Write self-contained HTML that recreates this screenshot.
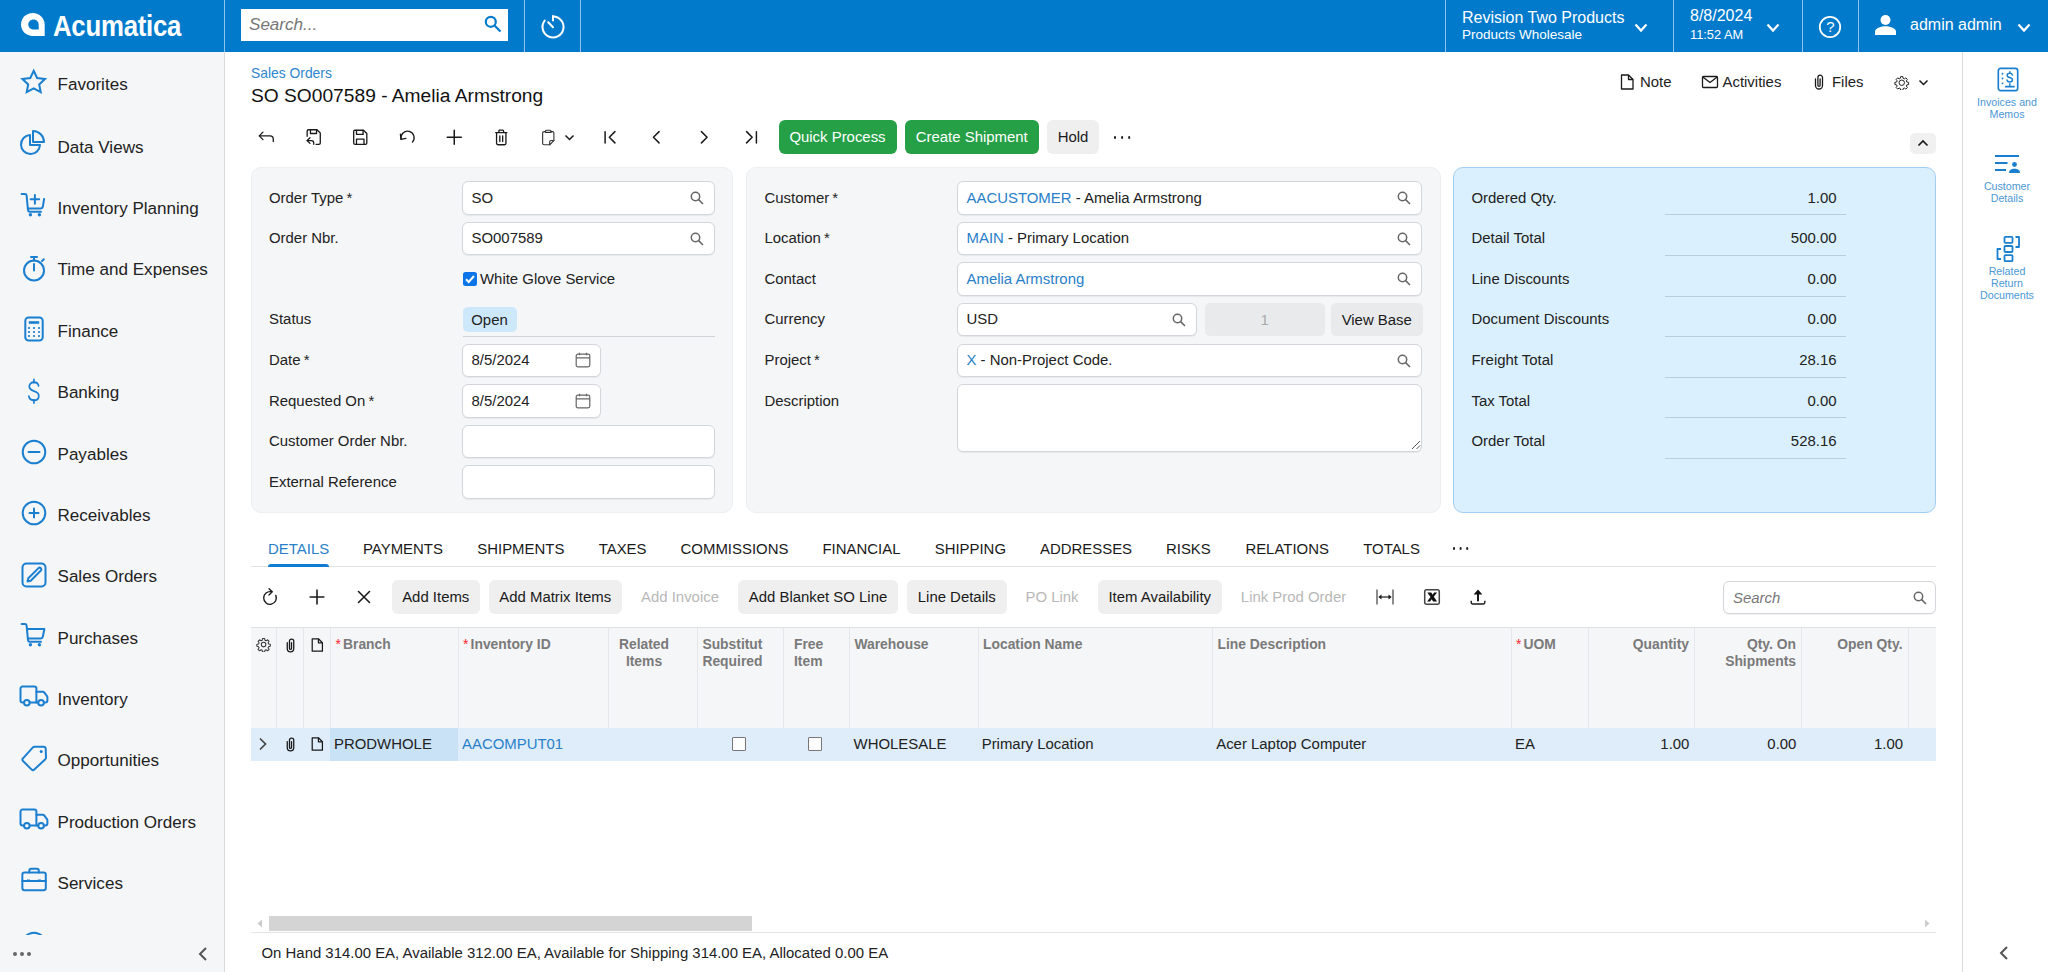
<!DOCTYPE html>
<html><head><meta charset="utf-8"><title>Sales Orders</title>
<style>
*{box-sizing:border-box;margin:0;padding:0}
html,body{width:2048px;height:972px;overflow:hidden;background:#fff;font-family:"Liberation Sans",sans-serif;color:#222}
.abs{position:absolute}
#top{position:absolute;left:0;top:0;width:2048px;height:52px;background:#027acc}
#top .div{position:absolute;top:0;width:1px;height:52px;background:#8cc3ec}
#side{position:absolute;left:0;top:52px;width:225px;height:920px;background:#f5f6f8;border-right:1px solid #dadbdd;overflow:hidden}
.nav{position:absolute;left:57.500px;font-size:17.070px;line-height:20px;color:#222;white-space:nowrap}
.nico{position:absolute;left:18.500px;width:30px;height:30px}
.nico svg{width:30px;height:30px;fill:none;stroke:#1b7fd0;stroke-width:2;stroke-linecap:round;stroke-linejoin:round}
#rail{position:absolute;left:1962px;top:52px;width:86px;height:920px;overflow:visible;background:#fff;border-left:1px solid #dadbdd}
.t{position:absolute;white-space:nowrap}
.lbl{position:absolute;font-size:14.930px;line-height:18px;white-space:nowrap;color:#222}
.inp{position:absolute;background:#fff;border:1px solid #d3d6da;border-radius:6px;box-shadow:0 1px 1px rgba(0,0,0,.06)}
.inp span{position:absolute;left:8.500px;top:6.500px;font-size:14.930px;line-height:18px;white-space:nowrap}
.lnk{color:#2a7fc9}
.panel{position:absolute;background:#f5f6f8;border-radius:10px;border:1px solid #eceef0}
.btn{position:absolute;height:34px;border-radius:6px;font-size:14.930px;line-height:34px;text-align:center;white-space:nowrap}
.ico{position:absolute}
.ico svg{display:block;fill:none;stroke:#1a1a1a;stroke-width:1.4;stroke-linecap:round;stroke-linejoin:round}
.rt{position:absolute;left:0;width:88px;text-align:center;font-size:10.670px;line-height:12.250px;color:#4b98d6}
.tb{position:absolute;top:126px;width:22.500px;height:22.500px}
.tb svg{width:22.500px;height:22.500px;fill:none;stroke:#1a1a1a;stroke-width:1.400;stroke-linecap:round;stroke-linejoin:round}
.gh{position:absolute;font-size:13.870px;line-height:16.500px;font-weight:bold;color:#7a7a7a;white-space:nowrap}
.gc{font-size:14.930px;line-height:18px}
</style></head><body>



<!-- TOP BAR -->
<div id="top">
  <div class="div" style="left:224px"></div>
  <div class="div" style="left:524px"></div>
  <div class="div" style="left:580px"></div>
  <div class="div" style="left:1445px"></div>
  <div class="div" style="left:1673px"></div>
  <div class="div" style="left:1802px"></div>
  <div class="div" style="left:1858px"></div>
  <!-- logo -->
  <svg class="abs" style="left:21px;top:13px" width="24" height="23" viewBox="0 0 24 23"><path d="M11.8 0C18.4 0 23.7 5.2 23.7 11.7V23H11.8C5.2 23 0 17.9 0 11.5S5.2 0 11.8 0z" fill="#fff"/><path d="M12.5 6.400c2.900 0 5.200 2.200 5.200 5v5h-5.200c-2.900 0-5.200-2.200-5.200-5s2.300-5 5.200-5z" fill="#027acc"/></svg>
  <div class="t" id="logo" style="left:53px;top:8px;font-size:30px;line-height:36px;font-weight:bold;color:#fff;transform:scaleX(.86);transform-origin:0 0;letter-spacing:-.3px">Acumatica</div>
  <!-- search -->
  <div class="abs" style="left:241px;top:9px;width:267px;height:32px;background:#fff"></div>
  <div class="t" style="left:249px;top:15px;font-size:17.070px;line-height:20px;font-style:italic;color:#777">Search...</div>
  <svg class="abs" style="left:484px;top:15px" width="18" height="18" viewBox="0 0 18 18" fill="none" stroke="#027acc" stroke-width="2.2"><circle cx="6.800" cy="6.800" r="5"/><path d="M10.500 10.500L16.500 16.500" stroke-linecap="butt"/></svg>
  <!-- clock -->
  <svg class="abs" style="left:540px;top:14px" width="26" height="26" viewBox="0 0 26 26" fill="none" stroke="#fff" stroke-width="2" stroke-linecap="round"><path d="M13 2.500a10.500 10.500 0 1 1-8.300 4.100"/><path d="M13 2v4.500"/><path d="M13 13.200L8.200 8.200"/></svg>
  <!-- company -->
  <div class="t" style="left:1462px;top:8px;font-size:16px;line-height:19px;color:#fff">Revision Two Products</div>
  <div class="t" style="left:1462px;top:27px;font-size:13.5px;line-height:15px;color:#fff">Products Wholesale</div>
  <svg class="abs chev" style="left:1634px;top:23px" width="14" height="10" viewBox="0 0 14 10" fill="none" stroke="#fff" stroke-width="2.200"><path d="M1.500 1.500L7 7.500L12.500 1.500"/></svg>
  <div class="t" style="left:1690px;top:6px;font-size:16px;line-height:19px;color:#fff">8/8/2024</div>
  <div class="t" style="left:1690px;top:27px;font-size:12.800px;line-height:15px;color:#fff">11:52 AM</div>
  <svg class="abs chev" style="left:1766px;top:23px" width="14" height="10" viewBox="0 0 14 10" fill="none" stroke="#fff" stroke-width="2.200"><path d="M1.500 1.500L7 7.500L12.500 1.500"/></svg>
  <!-- help -->
  <svg class="abs" style="left:1818px;top:15px" width="24" height="24" viewBox="0 0 24 24" fill="none" stroke="#fff" stroke-width="1.800"><circle cx="12" cy="12" r="10.200"/></svg>
  <div class="t" style="left:1825px;top:17px;font-size:14.930px;line-height:20px;color:#fff;width:11px;text-align:center">?</div>
  <!-- user -->
  <svg class="abs" style="left:1875px;top:15px" width="21" height="20" viewBox="0 0 21 20" fill="#fff"><circle cx="10.500" cy="5" r="5"/><path d="M0 20v-3.500c0-3.500 7-5.200 10.500-5.200s10.500 1.700 10.500 5.200V20z"/></svg>
  <div class="t" style="left:1910px;top:15px;font-size:16px;line-height:20px;color:#fff">admin admin</div>
  <svg class="abs chev" style="left:2017px;top:23px" width="14" height="10" viewBox="0 0 14 10" fill="none" stroke="#fff" stroke-width="2.200"><path d="M1.500 1.500L7 7.500L12.500 1.500"/></svg>
</div>


<!-- SIDEBAR -->
<div id="side">
  <div class="nico" style="top:15.2px;margin-left:0px"><svg viewBox="0 0 30 30"><path stroke-linejoin="miter" d="M14.700 3.800l3.400 7.200 7.900 1-5.800 5.400 1.500 7.800-7-3.900-7 3.900 1.500-7.800L3.400 12l7.900-1z"/></svg></div><div class="nav" style="top:22.9px">Favorites</div>
  <div class="nico" style="top:75.2px;margin-left:-1.3px"><svg viewBox="0 0 30 30"><path d="M13 8a9.500 9.500 0 1 0 10 10H13z"/><path d="M16 4v11h11A11 11 0 0 0 16 4z"/></svg></div><div class="nav" style="top:85.7px">Data Views</div>
  <div class="nico" style="top:139.4px;margin-left:0px"><svg viewBox="0 0 30 30"><path d="M2.600 2.900H5.800a1.800 1.800 0 0 1 1.800 1.600L9 19.200a1.800 1.800 0 0 0 1.800 1.600H22"/><circle cx="11.400" cy="23.700" r="1.700" fill="#1b7fd0" stroke="none"/><circle cx="20.400" cy="23.700" r="1.700" fill="#1b7fd0" stroke="none"/><path d="M25.100 8L23.800 15.800a2 2 0 0 1-2 1.600H9.200"/><path d="M15.900 4v8.700M11.600 8.350h8.600"/></svg></div><div class="nav" style="top:147.1px">Inventory Planning</div>
  <div class="nico" style="top:200.7px;margin-left:0px"><svg viewBox="0 0 30 30"><circle cx="15" cy="17.500" r="10"/><path d="M15 11v6.500M12 4h6M15 4v3.500M23 8l1.800-1.800"/></svg></div><div class="nav" style="top:208.4px">Time and Expenses</div>
  <div class="nico" style="top:262.1px;margin-left:0px"><svg viewBox="0 0 30 30"><rect x="6.300" y="3.500" width="17.400" height="23" rx="3.300"/><path d="M9.800 8.500h10.400" stroke-width="2.600" stroke-linecap="butt"/><g stroke-width="2.200"><path d="M10 14h.01M15 14h.01M20 14h.01M10 18h.01M15 18h.01M20 18h.01M10 22h.01M15 22h.01M20 22h.01"/></g></svg></div><div class="nav" style="top:269.8px">Finance</div>
  <div class="nico" style="top:323.5px;margin-left:0px"><svg viewBox="0 0 30 30"><g transform="translate(2.2 0) scale(.85 1)"><path d="M20.500 9.800c-.6-2.300-2.700-3.500-5.500-3.500-3.200 0-5.500 1.700-5.500 4.300 0 2.700 2.300 3.700 5.500 4.500 3.400.8 5.700 1.900 5.700 4.800 0 2.700-2.400 4.400-5.700 4.400-3.200 0-5.400-1.400-6-4"/><path d="M15 3.500v3M15 24v3"/></g></svg></div><div class="nav" style="top:331.2px">Banking</div>
  <div class="nico" style="top:384.8px;margin-left:0px"><svg viewBox="0 0 30 30"><circle cx="15" cy="15" r="11.300"/><path d="M9.500 15h11"/></svg></div><div class="nav" style="top:392.5px">Payables</div>
  <div class="nico" style="top:446.2px;margin-left:0px"><svg viewBox="0 0 30 30"><circle cx="15" cy="15" r="11.300"/><path d="M10.500 15h9M15 10.500v9"/></svg></div><div class="nav" style="top:453.9px">Receivables</div>
  <div class="nico" style="top:507.6px;margin-left:0px"><svg viewBox="0 0 30 30"><rect x="3.500" y="3.500" width="23" height="23" rx="4"/><path d="M8.500 21.500l.8-3.200L19.500 8.100a1.700 1.700 0 0 1 2.400 2.400L11.700 20.700z"/></svg></div><div class="nav" style="top:515.3px">Sales Orders</div>
  <div class="nico" style="top:569.0px;margin-left:0px"><svg viewBox="0 0 30 30"><path d="M2.600 2.900H5.800a1.800 1.800 0 0 1 1.800 1.600L9 19.200a1.800 1.800 0 0 0 1.800 1.600H22"/><circle cx="11.400" cy="23.700" r="1.700" fill="#1b7fd0" stroke="none"/><circle cx="20.400" cy="23.700" r="1.700" fill="#1b7fd0" stroke="none"/><path d="M8.500 8H25.400L23.800 15.800a2 2 0 0 1-2 1.600H9.200"/></svg></div><div class="nav" style="top:576.7px">Purchases</div>
  <div class="nico" style="top:630.3px;margin-left:0px"><svg viewBox="0 0 30 30"><path d="M5 20.600H3.500a2 2 0 0 1-2-2V6.600a2 2 0 0 1 2-2H15.400a2 2 0 0 1 2 2V20.600"/><path d="M10.700 20.600H19.200"/><path d="M17.400 9.800H23.800a2 2 0 0 1 1.600.8L28 14.200a2 2 0 0 1 .4 1.200V18.600a2 2 0 0 1-2 2H24.900"/><circle cx="7.860" cy="20.800" r="2.800"/><circle cx="22.060" cy="20.800" r="2.800"/></svg></div><div class="nav" style="top:638.0px">Inventory</div>
  <div class="nico" style="top:691.7px;margin-left:0px"><svg viewBox="0 0 30 30"><path d="M15.300 2.700H24.600Q26.600 2.700 26.700 4.700L27 13.600Q27 14.600 26.300 15.300L15.300 25.600Q14 26.800 12.700 25.600L4 17Q2.700 15.600 4 14.300L13.900 3.400Q14.500 2.700 15.300 2.700Z"/><circle cx="22.200" cy="7.400" r="1.500" fill="#1b7fd0" stroke="none"/></svg></div><div class="nav" style="top:699.4px">Opportunities</div>
  <div class="nico" style="top:753.1px;margin-left:0px"><svg viewBox="0 0 30 30"><path d="M5 20.600H3.500a2 2 0 0 1-2-2V6.600a2 2 0 0 1 2-2H15.400a2 2 0 0 1 2 2V20.600"/><path d="M10.700 20.600H19.200"/><path d="M17.400 9.800H23.800a2 2 0 0 1 1.600.8L28 14.200a2 2 0 0 1 .4 1.200V18.600a2 2 0 0 1-2 2H24.900"/><circle cx="7.860" cy="20.800" r="2.800"/><circle cx="22.060" cy="20.800" r="2.800"/></svg></div><div class="nav" style="top:760.8px">Production Orders</div>
  <div class="nico" style="top:814.4px;margin-left:0px"><svg viewBox="0 0 30 30"><rect x="3.350" y="6.400" width="23.450" height="17.900" rx="2.200"/><path d="M10.300 6.400V4.700a2 2 0 0 1 2-2h5.500a2 2 0 0 1 2 2V6.400"/><path d="M3.350 15.050H26.800"/><path d="M9.500 14.500v-1M20.400 14.500v-1" stroke-width="3" stroke-linecap="butt"/></svg></div><div class="nav" style="top:822.1px">Services</div>
  <div class="nico" style="top:877px"><svg viewBox="0 0 30 30"><circle cx="15" cy="15" r="11.300"/></svg></div>
  <div class="abs" style="left:0;top:883px;width:224px;height:37px;background:#f5f6f8"></div>
  <div class="abs" style="left:12.500px;top:899.500px;width:4px;height:4px;border-radius:2px;background:#666;box-shadow:7px 0 0 #666,14px 0 0 #666"></div>
  <svg class="abs" style="left:197px;top:893.500px" width="12" height="16" viewBox="0 0 12 16" fill="none" stroke="#555" stroke-width="2"><path d="M9 2L3 8l6 6"/></svg>
</div>

<!-- RIGHT RAIL -->
<div id="rail">
  <svg class="abs" style="left:33px;top:15px" width="24" height="26" viewBox="0 0 26 27" preserveAspectRatio="none" fill="none" stroke="#1b7fd0" stroke-width="1.800" stroke-linecap="round" stroke-linejoin="round"><rect x="2.500" y="1.500" width="21" height="23" rx="2.500"/><path d="M7 7h.01M7 12h.01M7 17h.01" stroke-width="2"/><path d="M10.500 20.500h9"/><path d="M17.800 8.300c-.4-1.200-1.500-1.800-2.900-1.800-1.600 0-2.800.8-2.800 2.200 0 1.300 1.100 1.800 2.800 2.200 1.700.4 2.900 1 2.900 2.400 0 1.400-1.300 2.200-2.900 2.200-1.600 0-2.700-.7-3-2M15 5v1.500M15 17.500V19" stroke-width="1.600"/></svg>
  <div class="rt" style="top:44px">Invoices and<br>Memos</div>
  <svg class="abs" style="left:31px;top:101px" width="28" height="22" viewBox="0 0 28 22" fill="none" stroke="#1b7fd0" stroke-width="1.800" stroke-linecap="butt"><path d="M1 3h24M1 10h12.500M1 17h11"/><circle cx="20.500" cy="11.500" r="2.400" fill="#1b7fd0" stroke="none"/><path d="M15 20c0-3 2.500-4.200 5.500-4.200s5.500 1.200 5.500 4.200z" fill="#1b7fd0" stroke="none"/></svg>
  <div class="rt" style="top:128px">Customer<br>Details</div>
  <svg class="abs" style="left:32px;top:183px" width="26" height="28" viewBox="0 0 26 28" fill="none" stroke="#1b7fd0" stroke-width="1.800" stroke-linecap="butt" stroke-linejoin="round"><rect x="9.500" y="1.800" width="8" height="6" rx="1"/><rect x="9.500" y="11" width="8" height="6" rx="1"/><rect x="9.500" y="20.200" width="8" height="6" rx="1"/><path d="M20.500 2h3.500v10h-3.500M6 14H2.500v10H6"/></svg>
  <div class="rt" style="top:212.500px">Related<br>Return<br>Documents</div>
  <svg class="abs" style="left:35px;top:893px" width="12" height="16" viewBox="0 0 12 16" fill="none" stroke="#555" stroke-width="2"><path d="M9 2L3 8l6 6"/></svg>
</div>

<!-- MAIN 1: title + toolbar -->
<div class="t" id="bc" style="left:251px;top:65px;font-size:13.870px;line-height:16px;color:#2e86cc">Sales Orders</div>
<div class="t" id="ttl" style="left:251px;top:85px;font-size:19.200px;line-height:22px;color:#111">SO SO007589 - Amelia Armstrong</div>

<!-- toolbar icons (centers at y=137.3) -->
<div class="tb" style="left:255.2px"><svg viewBox="0 0 24 24"><path d="M5 10.500h11a3.500 3.500 0 0 1 3.500 3.500v2.500"/><path d="M8.500 6.500L4.500 10.500l4 4"/></svg></div>
<div class="tb" style="left:302.100px"><svg viewBox="0 0 24 24"><path d="M5.500 11V5.500a1.500 1.500 0 0 1 1.500-1.500h9l3.500 3.500V18a1.500 1.500 0 0 1-1.500 1.500h-3"/><path d="M9 4.200V8h6.500V4.200"/><path d="M8.500 12.500l-3 3 3 3"/><path d="M5.500 15.500h4.500a2.500 2.500 0 0 1 2.500 2.500v1.500"/></svg></div>
<div class="tb" style="left:349.2px"><svg viewBox="0 0 24 24"><path d="M6 4.500h9.500l3.500 3.500v10a1.500 1.500 0 0 1-1.500 1.500h-11A1.500 1.500 0 0 1 5 18V6a1.500 1.500 0 0 1 1-1.500z"/><path d="M8 4.700V9h7V4.700"/><path d="M8 19.300V14h8v5.300"/></svg></div>
<div class="tb" style="left:396.1px"><svg viewBox="0 0 24 24"><path d="M5.500 14A7 7 0 1 1 17.500 17.200"/><path d="M4.700 8.800l.6 5.400 5.300-.9"/></svg></div>
<div class="tb" style="left:442.9px"><svg viewBox="0 0 24 24" style="stroke-width:1.600"><path d="M12 4.500v15M4.500 12h15"/></svg></div>
<div class="tb" style="left:490.1px"><svg viewBox="0 0 24 24"><path d="M6 7h12M9.500 7V5.300a1 1 0 0 1 1-1h3a1 1 0 0 1 1 1V7"/><path d="M7 7v11.500a1.500 1.500 0 0 0 1.500 1.500h7a1.500 1.500 0 0 0 1.500-1.500V7"/><path d="M10.500 10.500v6M13.500 10.500v6"/></svg></div>
<div class="tb" style="left:537.2px"><svg viewBox="0 0 24 24" style="stroke-width:1.200;stroke:#333"><path d="M9 6H7.500A1.500 1.500 0 0 0 6 7.500v11A1.500 1.500 0 0 0 7.500 20h6l4.500-4.500v-8A1.500 1.500 0 0 0 16.500 6H15"/><path d="M9 6.800V5.500a1 1 0 0 1 1-1h4a1 1 0 0 1 1 1v1.300z"/><path d="M13.500 20v-3a1.500 1.500 0 0 1 1.500-1.500h3"/></svg></div>
<svg class="abs" style="left:564px;top:134px" width="11" height="8" viewBox="0 0 11 8" fill="none" stroke="#1a1a1a" stroke-width="1.500"><path d="M1.500 1.500l4 4 4-4"/></svg>
<div class="tb" style="left:599.0px"><svg viewBox="0 0 24 24" style="stroke-width:1.600"><path d="M6.500 6v12M17 6l-6 6 6 6"/></svg></div>
<div class="tb" style="left:645.4px"><svg viewBox="0 0 24 24" style="stroke-width:1.600"><path d="M15 6l-6 6 6 6"/></svg></div>
<div class="tb" style="left:692.8px"><svg viewBox="0 0 24 24" style="stroke-width:1.600"><path d="M9 6l6 6-6 6"/></svg></div>
<div class="tb" style="left:739.8px"><svg viewBox="0 0 24 24" style="stroke-width:1.600"><path d="M17.500 6v12M7 6l6 6-6 6"/></svg></div>

<div class="btn" style="left:778.500px;top:120px;width:118px;background:#25a046;color:#fff">Quick Process</div>
<div class="btn" style="left:905px;top:120px;width:133.500px;background:#25a046;color:#fff">Create Shipment</div>
<div class="btn" style="left:1047px;top:120px;width:52px;background:#efefef;color:#1a1a1a">Hold</div>
<div class="abs" style="left:1113.500px;top:136.200px;width:2.400px;height:2.400px;border-radius:2px;background:#222;box-shadow:7.100px 0 0 #222,14.200px 0 0 #222"></div>

<!-- top-right actions -->
<svg class="abs" style="left:1619px;top:73px" width="16" height="18" viewBox="0 0 16 18" fill="none" stroke="#1a1a1a" stroke-width="1.300" stroke-linejoin="round"><path d="M2.500 2h7l4.500 4.500v9.500h-11.500z"/><path d="M9.500 2v4.500h4.500"/></svg>
<div class="t" style="left:1640px;top:73px;font-size:14.930px;line-height:18px">Note</div>
<svg class="abs" style="left:1701px;top:75px" width="18" height="14" viewBox="0 0 18 14" fill="none" stroke="#1a1a1a" stroke-width="1.300" stroke-linejoin="round"><rect x="1.500" y="1.500" width="15" height="11" rx="1"/><path d="M1.800 2l7.200 5.500 7.200-5.500"/></svg>
<div class="t" style="left:1722.500px;top:73px;font-size:14.930px;line-height:18px">Activities</div>
<svg class="abs" style="left:1812px;top:73px" width="14" height="18" viewBox="0 0 14 18" fill="none" stroke="#1a1a1a" stroke-width="1.300" stroke-linecap="round"><path d="M3.500 6v6.500a3.500 3.500 0 0 0 7 0V4.500a2.300 2.300 0 0 0-4.600 0v7.800a1.100 1.100 0 0 0 2.200 0V6"/></svg>
<div class="t" style="left:1832px;top:73px;font-size:14.930px;line-height:18px">Files</div>
<svg class="abs" style="left:1894px;top:74.500px" width="15.500" height="15.500" viewBox="0 0 24 24" fill="none" stroke="#1a1a1a" stroke-width="1.500" stroke-linejoin="round"><circle cx="12" cy="12" r="4.200"/><path d="M10.300 2.500h3.400l.5 2.700 1.800.8 2.300-1.600 2.400 2.400-1.600 2.300.8 1.800 2.700.5v3.400l-2.700.5-.8 1.800 1.600 2.300-2.400 2.400-2.300-1.600-1.800.8-.5 2.700h-3.400l-.5-2.700-1.800-.8-2.300 1.600-2.400-2.400 1.600-2.300-.8-1.800-2.700-.5v-3.400l2.700-.5.8-1.800-1.600-2.300 2.400-2.400 2.300 1.600 1.800-.8z"/></svg>
<svg class="abs" style="left:1918px;top:79px" width="11" height="8" viewBox="0 0 11 8" fill="none" stroke="#1a1a1a" stroke-width="1.500"><path d="M1.500 1.500l4 4 4-4"/></svg>
<div class="abs" style="left:1910.300px;top:133.200px;width:25.500px;height:20.500px;border-radius:5px;background:#f0f0f0"></div>
<svg class="abs" style="left:1917px;top:139.200px" width="12" height="8" viewBox="0 0 12 8" fill="none" stroke="#1a1a1a" stroke-width="1.700"><path d="M1.500 6.500l4.500-4.500 4.500 4.500"/></svg>

<!-- MAIN 2: form panels -->
<div class="panel" style="left:251px;top:167px;width:482px;height:345.500px"></div>
<div class="panel" style="left:746px;top:167px;width:694.500px;height:345.500px"></div>
<div class="panel" style="left:1453px;top:167px;width:483px;height:345.500px;background:#dbf0fe;border:1px solid #a3cdf0"></div>
<div class="lbl" style="left:269px;top:188.6px">Order Type <span style="margin-left:-1px">*</span></div>
<div class="inp" style="left:462px;top:181.1px;width:253px;height:33.5px"><span>SO</span></div>
<svg class="abs" style="left:690px;top:191.1px" width="14" height="14" viewBox="0 0 14 14" fill="none" stroke="#666" stroke-width="1.500"><circle cx="5.500" cy="5.500" r="4.200"/><path d="M8.600 8.600l4.400 4.400"/></svg>
<div class="lbl" style="left:269px;top:229.2px">Order Nbr.</div>
<div class="inp" style="left:462px;top:221.7px;width:253px;height:33.5px"><span>SO007589</span></div>
<svg class="abs" style="left:690px;top:231.7px" width="14" height="14" viewBox="0 0 14 14" fill="none" stroke="#666" stroke-width="1.500"><circle cx="5.500" cy="5.500" r="4.200"/><path d="M8.600 8.600l4.400 4.400"/></svg>
<div class="abs" style="left:462.500px;top:271.8px;width:14px;height:14px;border-radius:2.500px;background:#0b74e8"></div><svg class="abs" style="left:462.500px;top:271.8px" width="14" height="14" viewBox="0 0 14 14" fill="none" stroke="#fff" stroke-width="2"><path d="M3 7.300l2.700 2.700 5.300-6"/></svg>
<div class="lbl" style="left:480px;top:269.8px">White Glove Service</div>
<div class="lbl" style="left:269px;top:310.4px">Status</div>
<div class="abs" style="left:462.500px;top:306.9px;width:54px;height:25px;border-radius:5px;background:#cde7fb;font-size:14.930px;line-height:25px;text-align:center">Open</div>
<div class="abs" style="left:462.500px;top:335.9px;width:252.500px;height:1px;background:#d0d2d5"></div>
<div class="lbl" style="left:269px;top:351.0px">Date <span style="margin-left:-1px">*</span></div>
<div class="inp" style="left:462px;top:343.5px;width:138.5px;height:33.5px"><span>8/5/2024</span></div>
<svg class="abs" style="left:575.0px;top:352.0px" width="16" height="16" viewBox="0 0 16 16" fill="none" stroke="#666" stroke-width="1.200"><rect x="1.200" y="2.200" width="13.600" height="12.600" rx="1.800"/><path d="M1.200 5.800h13.600M4.500 .8v2.400M11.500 .8v2.400"/></svg>
<div class="lbl" style="left:269px;top:391.6px">Requested On <span style="margin-left:-1px">*</span></div>
<div class="inp" style="left:462px;top:384.1px;width:138.5px;height:33.5px"><span>8/5/2024</span></div>
<svg class="abs" style="left:575.0px;top:392.6px" width="16" height="16" viewBox="0 0 16 16" fill="none" stroke="#666" stroke-width="1.200"><rect x="1.200" y="2.200" width="13.600" height="12.600" rx="1.800"/><path d="M1.200 5.800h13.600M4.500 .8v2.400M11.500 .8v2.400"/></svg>
<div class="lbl" style="left:269px;top:432.2px">Customer Order Nbr.</div>
<div class="inp" style="left:462px;top:424.7px;width:253px;height:33.5px"><span></span></div>
<div class="lbl" style="left:269px;top:472.8px">External Reference</div>
<div class="inp" style="left:462px;top:465.3px;width:253px;height:33.5px"><span></span></div>
<div class="lbl" style="left:764.5px;top:188.6px">Customer <span style="margin-left:-1px">*</span></div>
<div class="inp" style="left:957px;top:181.1px;width:465px;height:33.5px"><span><span class="lnk" style="position:static">AACUSTOMER</span> - Amelia Armstrong</span></div>
<svg class="abs" style="left:1397px;top:191.1px" width="14" height="14" viewBox="0 0 14 14" fill="none" stroke="#666" stroke-width="1.500"><circle cx="5.500" cy="5.500" r="4.200"/><path d="M8.600 8.600l4.400 4.400"/></svg>
<div class="lbl" style="left:764.5px;top:229.2px">Location <span style="margin-left:-1px">*</span></div>
<div class="inp" style="left:957px;top:221.7px;width:465px;height:33.5px"><span><span class="lnk" style="position:static">MAIN</span> - Primary Location</span></div>
<svg class="abs" style="left:1397px;top:231.7px" width="14" height="14" viewBox="0 0 14 14" fill="none" stroke="#666" stroke-width="1.500"><circle cx="5.500" cy="5.500" r="4.200"/><path d="M8.600 8.600l4.400 4.400"/></svg>
<div class="lbl" style="left:764.5px;top:269.8px">Contact</div>
<div class="inp" style="left:957px;top:262.3px;width:465px;height:33.5px"><span><span class="lnk" style="position:static">Amelia Armstrong</span></span></div>
<svg class="abs" style="left:1397px;top:272.3px" width="14" height="14" viewBox="0 0 14 14" fill="none" stroke="#666" stroke-width="1.500"><circle cx="5.500" cy="5.500" r="4.200"/><path d="M8.600 8.600l4.400 4.400"/></svg>
<div class="lbl" style="left:764.5px;top:310.4px">Currency</div>
<div class="inp" style="left:957px;top:302.9px;width:240px;height:33.5px"><span>USD</span></div>
<svg class="abs" style="left:1172px;top:312.9px" width="14" height="14" viewBox="0 0 14 14" fill="none" stroke="#666" stroke-width="1.500"><circle cx="5.500" cy="5.500" r="4.200"/><path d="M8.600 8.600l4.400 4.400"/></svg>
<div class="abs" style="left:1204.500px;top:302.9px;width:120.500px;height:33.500px;border-radius:5px;background:#e9eaec;font-size:14.930px;line-height:33.500px;text-align:center;color:#aaa">1</div>
<div class="abs" style="left:1331px;top:302.9px;width:91.500px;height:33.500px;border-radius:5px;background:#e9eaec;font-size:14.930px;line-height:33.500px;text-align:center;color:#1a1a1a">View Base</div>
<div class="lbl" style="left:764.5px;top:351.0px">Project <span style="margin-left:-1px">*</span></div>
<div class="inp" style="left:957px;top:343.5px;width:465px;height:33.5px"><span><span class="lnk" style="position:static">X</span> - Non-Project Code.</span></div>
<svg class="abs" style="left:1397px;top:353.5px" width="14" height="14" viewBox="0 0 14 14" fill="none" stroke="#666" stroke-width="1.500"><circle cx="5.500" cy="5.500" r="4.200"/><path d="M8.600 8.600l4.400 4.400"/></svg>
<div class="lbl" style="left:764.5px;top:391.6px">Description</div>
<div class="inp" style="left:957px;top:384.1px;width:465px;height:68px"><span></span></div>
<svg class="abs" style="left:1411px;top:440px" width="10" height="10" viewBox="0 0 10 10" stroke="#555" stroke-width="1" fill="none"><path d="M9 1L1 9M9 5.500L5.500 9"/></svg>
<div class="lbl" style="left:1471.500px;top:188.6px">Ordered Qty.</div><div class="lbl" style="left:1665px;width:171.500px;text-align:right;top:188.6px">1.00</div><div class="abs" style="left:1665px;top:214.3px;width:180.500px;height:1px;background:#b9cfe0"></div>
<div class="lbl" style="left:1471.500px;top:229.2px">Detail Total</div><div class="lbl" style="left:1665px;width:171.500px;text-align:right;top:229.2px">500.00</div><div class="abs" style="left:1665px;top:254.9px;width:180.500px;height:1px;background:#b9cfe0"></div>
<div class="lbl" style="left:1471.500px;top:269.8px">Line Discounts</div><div class="lbl" style="left:1665px;width:171.500px;text-align:right;top:269.8px">0.00</div><div class="abs" style="left:1665px;top:295.5px;width:180.500px;height:1px;background:#b9cfe0"></div>
<div class="lbl" style="left:1471.500px;top:310.4px">Document Discounts</div><div class="lbl" style="left:1665px;width:171.500px;text-align:right;top:310.4px">0.00</div><div class="abs" style="left:1665px;top:336.1px;width:180.500px;height:1px;background:#b9cfe0"></div>
<div class="lbl" style="left:1471.500px;top:351.0px">Freight Total</div><div class="lbl" style="left:1665px;width:171.500px;text-align:right;top:351.0px">28.16</div><div class="abs" style="left:1665px;top:376.7px;width:180.500px;height:1px;background:#b9cfe0"></div>
<div class="lbl" style="left:1471.500px;top:391.6px">Tax Total</div><div class="lbl" style="left:1665px;width:171.500px;text-align:right;top:391.6px">0.00</div><div class="abs" style="left:1665px;top:417.3px;width:180.500px;height:1px;background:#b9cfe0"></div>
<div class="lbl" style="left:1471.500px;top:432.2px">Order Total</div><div class="lbl" style="left:1665px;width:171.500px;text-align:right;top:432.2px">528.16</div><div class="abs" style="left:1665px;top:457.9px;width:180.500px;height:1px;background:#b9cfe0"></div>

<!-- MAIN 3: tabs + grid -->
<div class="t tab" style="left:268.1px;top:539.500px;font-size:14.930px;line-height:18px;color:#2a7fc9">DETAILS</div>
<div class="t tab" style="left:363px;top:539.500px;font-size:14.930px;line-height:18px;color:#1a1a1a">PAYMENTS</div>
<div class="t tab" style="left:477.3px;top:539.500px;font-size:14.930px;line-height:18px;color:#1a1a1a">SHIPMENTS</div>
<div class="t tab" style="left:598.7px;top:539.500px;font-size:14.930px;line-height:18px;color:#1a1a1a">TAXES</div>
<div class="t tab" style="left:680.6px;top:539.500px;font-size:14.930px;line-height:18px;color:#1a1a1a">COMMISSIONS</div>
<div class="t tab" style="left:822.5px;top:539.500px;font-size:14.930px;line-height:18px;color:#1a1a1a">FINANCIAL</div>
<div class="t tab" style="left:934.7px;top:539.500px;font-size:14.930px;line-height:18px;color:#1a1a1a">SHIPPING</div>
<div class="t tab" style="left:1040px;top:539.500px;font-size:14.930px;line-height:18px;color:#1a1a1a">ADDRESSES</div>
<div class="t tab" style="left:1166px;top:539.500px;font-size:14.930px;line-height:18px;color:#1a1a1a">RISKS</div>
<div class="t tab" style="left:1245.4px;top:539.500px;font-size:14.930px;line-height:18px;color:#1a1a1a">RELATIONS</div>
<div class="t tab" style="left:1363.2px;top:539.500px;font-size:14.930px;line-height:18px;color:#1a1a1a">TOTALS</div>
<div class="abs" style="left:1452.500px;top:547.200px;width:2.400px;height:2.400px;border-radius:2px;background:#222;box-shadow:6.600px 0 0 #222,13.200px 0 0 #222"></div>
<div class="abs" style="left:251px;top:566px;width:1685px;height:1px;background:#e1e2e5"></div>
<div class="abs" style="left:268px;top:563.500px;width:60.500px;height:3px;border-radius:3px 3px 0 0;background:#0f7bd3"></div>
<svg class="abs" style="left:259px;top:586px" width="22" height="22" viewBox="0 0 24 24" fill="none" stroke="#1a1a1a" stroke-width="1.500" stroke-linecap="round" stroke-linejoin="round"><path d="M18.300 10.200A6.900 6.900 0 1 1 13.400 6.300"/><path d="M11 3l3.500 3.400-3.600 3.400"/></svg>
<svg class="abs" style="left:306px;top:586px" width="22" height="22" viewBox="0 0 24 24" fill="none" stroke="#1a1a1a" stroke-width="1.700" stroke-linecap="round"><path d="M12 4.500v15M4.500 12h15"/></svg>
<svg class="abs" style="left:352.500px;top:586px" width="22" height="22" viewBox="0 0 24 24" fill="none" stroke="#1a1a1a" stroke-width="1.700" stroke-linecap="round"><path d="M6 6l12 12M18 6L6 18"/></svg>
<div class="btn" style="left:391.5px;top:580px;width:88.5px;height:33.500px;line-height:33.500px;background:#efefef;color:#1a1a1a">Add Items</div>
<div class="btn" style="left:488.5px;top:580px;width:133.5px;height:33.500px;line-height:33.500px;background:#efefef;color:#1a1a1a">Add Matrix Items</div>
<div class="btn" style="left:630px;top:580px;width:100px;height:33.500px;line-height:33.500px;color:#b8b8b8">Add Invoice</div>
<div class="btn" style="left:738px;top:580px;width:160px;height:33.500px;line-height:33.500px;background:#efefef;color:#1a1a1a">Add Blanket SO Line</div>
<div class="btn" style="left:907px;top:580px;width:99.5px;height:33.500px;line-height:33.500px;background:#efefef;color:#1a1a1a">Line Details</div>
<div class="btn" style="left:1015px;top:580px;width:74px;height:33.500px;line-height:33.500px;color:#b8b8b8">PO Link</div>
<div class="btn" style="left:1097.5px;top:580px;width:124.5px;height:33.500px;line-height:33.500px;background:#efefef;color:#1a1a1a">Item Availability</div>
<div class="btn" style="left:1230px;top:580px;width:127px;height:33.500px;line-height:33.500px;color:#b8b8b8">Link Prod Order</div>
<svg class="abs" style="left:1374.500px;top:587px" width="20" height="20" viewBox="0 0 20 20" fill="none" stroke="#1a1a1a"><path d="M2 2.500v15M18 2.500v15" stroke-width="1"/><path d="M5.500 10h9" stroke-width="1.200"/><path d="M3.300 10l3.200-2.600v5.200zM16.700 10l-3.200-2.600v5.200z" fill="#1a1a1a" stroke="none"/></svg>
<svg class="abs" style="left:1422.500px;top:588px" width="18" height="18" viewBox="0 0 18 18" fill="none" stroke="#444"><rect x="1.700" y="1.700" width="14.600" height="14.600" rx="2" stroke-width="1.500"/><path d="M4.300 4.500h4l1.300 2.200 1.500-2.200h3L10.800 8.700l3.300 4.800h-4L8.700 11.200 7.100 13.500H4.100l3.400-4.600z" fill="#111" stroke="none"/></svg>
<svg class="abs" style="left:1468.400px;top:587px" width="20" height="20" viewBox="0 0 20 20" fill="none" stroke="#1a1a1a" stroke-width="1.400"><path d="M3.200 13.800v1.700a1.500 1.500 0 0 0 1.500 1.500h10.600a1.500 1.500 0 0 0 1.500-1.500v-1.700"/><path d="M10 14.200V6" stroke-width="2"/><path d="M5.600 7.400L10 2.600l4.400 4.800z" fill="#111" stroke="none"/></svg>
<div class="inp" style="left:1723px;top:580.500px;width:213px;height:33px"></div>
<div class="t" style="left:1733px;top:588.500px;font-size:14.930px;line-height:18px;font-style:italic;color:#777">Search</div>
<svg class="abs" style="left:1913px;top:591px" width="14" height="14" viewBox="0 0 14 14" fill="none" stroke="#666" stroke-width="1.500"><circle cx="5.500" cy="5.500" r="4.200"/><path d="M8.600 8.600l4.400 4.400"/></svg>
<div class="abs" style="left:251px;top:627px;width:1685px;height:101.500px;background:#f5f6f8;border-top:1px solid #dfe1e4"></div>
<div class="abs" style="left:276px;top:628px;width:1px;height:100px;background:#e6e7ea"></div><div class="abs" style="left:303px;top:628px;width:1px;height:100px;background:#e6e7ea"></div><div class="abs" style="left:330px;top:628px;width:1px;height:100px;background:#e6e7ea"></div><div class="abs" style="left:458px;top:628px;width:1px;height:100px;background:#e6e7ea"></div><div class="abs" style="left:608px;top:628px;width:1px;height:100px;background:#e6e7ea"></div><div class="abs" style="left:697px;top:628px;width:1px;height:100px;background:#e6e7ea"></div><div class="abs" style="left:783px;top:628px;width:1px;height:100px;background:#e6e7ea"></div><div class="abs" style="left:849px;top:628px;width:1px;height:100px;background:#e6e7ea"></div><div class="abs" style="left:978px;top:628px;width:1px;height:100px;background:#e6e7ea"></div><div class="abs" style="left:1212px;top:628px;width:1px;height:100px;background:#e6e7ea"></div><div class="abs" style="left:1511px;top:628px;width:1px;height:100px;background:#e6e7ea"></div><div class="abs" style="left:1588px;top:628px;width:1px;height:100px;background:#e6e7ea"></div><div class="abs" style="left:1694px;top:628px;width:1px;height:100px;background:#e6e7ea"></div><div class="abs" style="left:1801px;top:628px;width:1px;height:100px;background:#e6e7ea"></div><div class="abs" style="left:1908px;top:628px;width:1px;height:100px;background:#e6e7ea"></div>
<div class="abs" style="left:251px;top:728px;width:1685px;height:32.500px;background:#dfedfa"></div>
<div class="abs" style="left:330px;top:728px;width:128px;height:32.500px;background:#cae2f6"></div>
<svg class="abs" style="left:255.800px;top:637.300px" width="15.200" height="15.200" viewBox="0 0 24 24" fill="none" stroke="#333" stroke-width="1.600" stroke-linejoin="round"><path d="M10.300 2.500h3.400l.5 2.700 1.800.8 2.300-1.600 2.400 2.400-1.600 2.300.8 1.800 2.700.5v3.400l-2.700.5-.8 1.800 1.600 2.300-2.400 2.400-2.300-1.600-1.800.8-.5 2.700h-3.400l-.5-2.700-1.800-.8-2.300 1.600-2.400-2.400 1.600-2.300-.8-1.800-2.700-.5v-3.400l2.700-.5.8-1.800-1.600-2.300 2.400-2.400 2.300 1.600 1.800-.8z"/><circle cx="12" cy="12" r="3.600"/></svg>
<svg class="abs" style="left:283.500px;top:637px" width="13" height="16.700" viewBox="0 0 14 18" fill="none" stroke="#1a1a1a" stroke-width="1.400" stroke-linecap="round"><path d="M3.500 6v6.500a3.500 3.500 0 0 0 7 0V4.500a2.300 2.300 0 0 0-4.600 0v7.800a1.100 1.100 0 0 0 2.200 0V6"/></svg>
<svg class="abs" style="left:309.800px;top:637px" width="14.200" height="16" preserveAspectRatio="none" viewBox="0 0 16 18" fill="none" stroke="#1a1a1a" stroke-width="1.400" stroke-linejoin="round"><path d="M2.500 2h7l4.500 4.500v9.500h-11.500z"/><path d="M9.500 2v4.500h4.500"/></svg>
<svg class="abs" style="left:283.500px;top:736px" width="13" height="16.700" viewBox="0 0 14 18" fill="none" stroke="#1a1a1a" stroke-width="1.400" stroke-linecap="round"><path d="M3.500 6v6.500a3.500 3.500 0 0 0 7 0V4.500a2.300 2.300 0 0 0-4.600 0v7.800a1.100 1.100 0 0 0 2.200 0V6"/></svg>
<svg class="abs" style="left:309.800px;top:736px" width="14.200" height="16" preserveAspectRatio="none" viewBox="0 0 16 18" fill="none" stroke="#1a1a1a" stroke-width="1.400" stroke-linejoin="round"><path d="M2.500 2h7l4.500 4.500v9.500h-11.500z"/><path d="M9.500 2v4.500h4.500"/></svg>
<svg class="abs" style="left:258px;top:736.500px" width="10" height="14" viewBox="0 0 10 14" fill="none" stroke="#444" stroke-width="1.700"><path d="M2 1.500l5.500 5.500-5.500 5.500"/></svg>
<div class="gh" style="left:343px;top:636px"><span style="color:#f5222d;font-weight:normal;position:absolute;left:-7.500px;top:0">*</span>Branch</div>
<div class="gh" style="left:470.6px;top:636px"><span style="color:#f5222d;font-weight:normal;position:absolute;left:-7.500px;top:0">*</span>Inventory ID</div>
<div class="gh" style="left:544px;width:200px;text-align:center;top:636px">Related<br>Items</div>
<div class="gh" style="left:702.4px;top:636px">Substitut<br>Required</div>
<div class="gh" style="left:794px;top:636px">Free<br>Item</div>
<div class="gh" style="left:854.4px;top:636px">Warehouse</div>
<div class="gh" style="left:983px;top:636px">Location Name</div>
<div class="gh" style="left:1217.5px;top:636px">Line Description</div>
<div class="gh" style="left:1523.5px;top:636px"><span style="color:#f5222d;font-weight:normal;position:absolute;left:-7.500px;top:0">*</span>UOM</div>
<div class="gh" style="left:1489px;width:200px;text-align:right;top:636px">Quantity</div>
<div class="gh" style="left:1596px;width:200px;text-align:right;top:636px">Qty. On<br>Shipments</div>
<div class="gh" style="left:1702.5px;width:200px;text-align:right;top:636px">Open Qty.</div>
<div class="t gc " style="left:334px;top:735px">PRODWHOLE</div>
<div class="t gc lnk" style="left:462px;top:735px">AACOMPUT01</div>
<div class="abs" style="left:732.4px;top:737px;width:14px;height:14px;background:#fff;border:1px solid #777;border-radius:1px"></div><div class="abs" style="left:808.4px;top:737px;width:14px;height:14px;background:#fff;border:1px solid #777;border-radius:1px"></div><div class="t gc " style="left:853.6px;top:735px">WHOLESALE</div>
<div class="t gc " style="left:981.7px;top:735px">Primary Location</div>
<div class="t gc " style="left:1216.2px;top:735px">Acer Laptop Computer</div>
<div class="t gc " style="left:1515px;top:735px">EA</div>
<div class="t gc" style="left:1489.4px;width:200px;text-align:right;top:735px">1.00</div>
<div class="t gc" style="left:1596.4px;width:200px;text-align:right;top:735px">0.00</div>
<div class="t gc" style="left:1703px;width:200px;text-align:right;top:735px">1.00</div>
<div class="abs" style="left:269px;top:915.500px;width:483px;height:15.500px;background:#d4d4d4"></div>
<svg class="abs" style="left:257px;top:919px" width="6" height="9" viewBox="0 0 6 9"><path d="M5 0.500v8l-4.500-4z" fill="#ccc"/></svg>
<svg class="abs" style="left:1923.500px;top:919px" width="6" height="9" viewBox="0 0 6 9"><path d="M1 0.500v8l4.500-4z" fill="#ccc"/></svg>
<div class="abs" style="left:251px;top:932px;width:1685px;height:1px;background:#e4e4e4"></div>
<div class="t" id="foot" style="left:261.500px;top:944px;font-size:14.930px;line-height:18px">On Hand 314.00 EA, Available 312.00 EA, Available for Shipping 314.00 EA, Allocated 0.00 EA</div>

</body></html>
